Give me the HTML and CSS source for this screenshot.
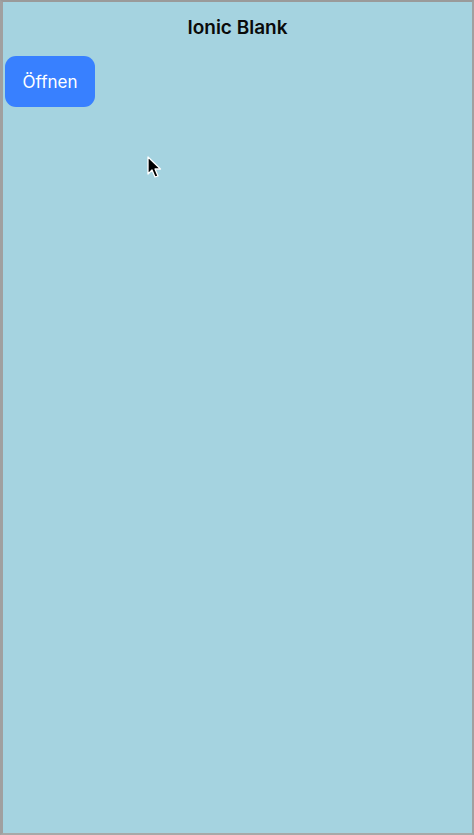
FILE: index.html
```html
<!DOCTYPE html>
<html>
<head>
  <meta charset="utf-8">
  <title>Ionic Blank</title>
  <link rel="stylesheet" href="styles.css">
</head>
<body>
  <div class="app-frame">
    <header class="toolbar">
      <h1 class="toolbar-title">Ionic Blank</h1>
    </header>
    <main class="content">
      <button class="open-btn">Öffnen</button>
    </main>

    <svg class="cursor" width="16" height="24" viewBox="0 0 16 24">
      <path d="M1 1 L1 18 L5 14 L8 21 L11 20 L8 13 L13.5 13 Z" fill="#000" stroke="#fff" stroke-width="1.3" stroke-linejoin="round"/>
    </svg>
  </div>
</body>
</html>
```

FILE: styles.css
```css
html, body {
  margin: 0;
  padding: 0;
  height: 100%;
}

body {
  background: #9c9c9c;
  font-family: "Inter", "Liberation Sans", sans-serif;
}

.app-frame {
  position: relative;
  box-sizing: border-box;
  height: 835px;
  border-top: 2px solid #9a9a9a;
  border-left: 3px solid #a0a0a0;
  border-right: 2px solid #a0a0a0;
  border-bottom: 2px solid #a8a8a8;
  background: #a5d3e0;
  display: flex;
  flex-direction: column;
}

.toolbar {
  height: 50px;
  display: flex;
  align-items: center;
  justify-content: center;
}

.toolbar-title {
  margin: 0;
  font-size: 19px;
  font-weight: 600;
  color: #0a0a0a;
}

.content {
  flex-grow: 1;
  padding: 4px 2px;
}

.open-btn {
  width: 90px;
  height: 51px;
  border: none;
  border-radius: 11px;
  background-color: #3880ff;
  color: #ffffff;
  font-family: "Inter", "Liberation Sans", sans-serif;
  font-size: 17px;
  cursor: pointer;
}

.cursor {
  position: absolute;
  top: 154px;
  left: 144px;
}
```
